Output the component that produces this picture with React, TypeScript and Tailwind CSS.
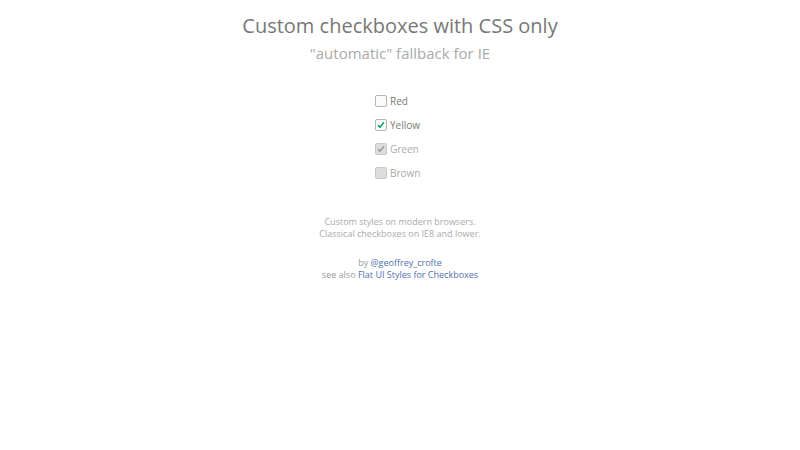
import { ReactNode } from "react";

type Item = { label: string; checked?: boolean; disabled?: boolean };

const items: Item[] = [
  { label: "Red" },
  { label: "Yellow", checked: true },
  { label: "Green", checked: true, disabled: true },
  { label: "Brown", disabled: true },
];

function Box({ checked, disabled }: { checked?: boolean; disabled?: boolean }) {
  return (
    <span
      className={
        "relative inline-block shrink-0 w-[12px] h-[12px] rounded-[2px] border " +
        (disabled ? "border-[#c8c8c8] bg-[#dddddd]" : "border-[#b5b5b5] bg-[#fafafa]")
      }
    >
      {checked && (
        <svg viewBox="0 0 12 12" className="absolute -left-px -top-px w-[12px] h-[12px]">
          <path
            d="M3.4 6.6 L5 8.2 L8.6 3.8"
            fill="none"
            stroke={disabled ? "#999999" : "#0a9e74"}
            strokeWidth="1.5"
            strokeLinecap="round"
            strokeLinejoin="round"
          />
        </svg>
      )}
    </span>
  );
}

function Link({ children }: { children: ReactNode }) {
  return <a className="text-[#4f6fae] no-underline">{children}</a>;
}

export default function App() {
  return (
    <div className="w-[800px] h-[450px] bg-white font-['Open_Sans',sans-serif] text-center">
      <h1 className="pt-[10px] text-[20px] leading-[32px] text-[#777777]">
        Custom checkboxes with CSS only
      </h1>
      <h2 className="text-[15px] leading-[22px] text-[#aaaaaa]">
        "automatic" fallback for IE
      </h2>

      <div className="mt-[29px] flex flex-col items-center gap-[8px]">
        {items.map((it) => (
          <label key={it.label} className="flex items-center w-[46px] mr-[4px] h-[16px] gap-[3px]">
            <Box checked={it.checked} disabled={it.disabled} />
            <span
              className={
                "text-[10px] leading-[16px] " + (it.disabled ? "text-[#aaaaaa]" : "text-[#777777]")
              }
            >
              {it.label}
            </span>
          </label>
        ))}
      </div>

      <div className="mt-[35px] text-[9px] leading-[12px] text-[#aaaaaa]">
        <p>Custom styles on modern browsers.</p>
        <p>Classical checkboxes on IE8 and lower.</p>
      </div>

      <div className="mt-[17px] text-[9px] leading-[12px] text-[#999999]">
        <p>
          by <Link>@geoffrey_crofte</Link>
        </p>
        <p>
          see also <Link>Flat UI Styles for Checkboxes</Link>
        </p>
      </div>
    </div>
  );
}
